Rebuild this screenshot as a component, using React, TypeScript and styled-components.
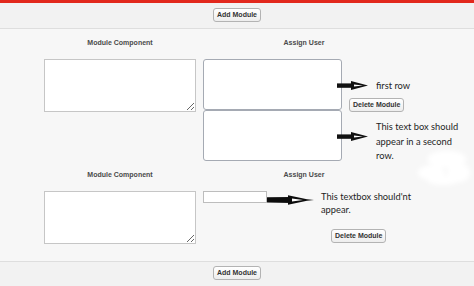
import React from "react";
import styled, { createGlobalStyle } from "styled-components";

const GlobalStyle = createGlobalStyle`
  html, body {
    margin: 0;
    padding: 0;
    background: #f7f7f7;
  }
  * {
    box-sizing: border-box;
  }
`;

const Page = styled.div`
  position: relative;
  width: 474px;
  height: 286px;
  overflow: hidden;
  background: #f7f7f7;
  font-family: Arial, "Liberation Sans", sans-serif;
  display: flex;
  flex-direction: column;
`;

const RedBar = styled.div`
  height: 3px;
  background: #e2281d;
`;

const ButtonBar = styled.div<{ $top?: boolean }>`
  height: ${(p) => (p.$top ? "27px" : "26px")};
  background: #f2f2f2;
  display: flex;
  justify-content: center;
  align-items: ${(p) => (p.$top ? "center" : "flex-start")};
  padding-top: ${(p) => (p.$top ? "0" : "4px")};
  border-bottom: ${(p) => (p.$top ? "1px solid #dedede" : "none")};
  border-top: ${(p) => (p.$top ? "none" : "1px solid #dedede")};
`;

const SmallButton = styled.button`
  height: 14px;
  padding: 0 3px;
  font-family: Arial, "Liberation Sans", sans-serif;
  font-size: 7px;
  font-weight: bold;
  color: #333;
  background: linear-gradient(#ffffff, #ededed);
  border: 1px solid #b3b3b3;
  border-radius: 3px;
  line-height: 12px;
  cursor: pointer;
`;

const DeleteButton = styled(SmallButton)<{ $left: number; $top: number }>`
  margin-left: ${(p) => p.$left}px;
  margin-top: ${(p) => p.$top}px;
  align-self: flex-start;
`;

const ModuleBlock = styled.section<{ $top: number; $bottom: number }>`
  padding-top: ${(p) => p.$top}px;
  padding-bottom: ${(p) => p.$bottom}px;
`;

const HeaderRow = styled.div`
  display: grid;
  grid-template-columns: 152px 202px;
  column-gap: 7px;
  padding-left: 44px;
  height: 9px;
  margin-bottom: 12px;
`;

const HeaderCell = styled.div`
  text-align: center;
  font-size: 7px;
  font-weight: bold;
  line-height: 9px;
  color: #4a4a4a;
`;

const BodyRow = styled.div`
  display: flex;
  align-items: flex-start;
  padding-left: 44px;
`;

const ComponentArea = styled.textarea`
  width: 152px;
  height: 53px;
  margin: 0 7px 0 0;
  padding: 2px;
  background: #fff;
  border: 1px solid #c6c6c6;
  border-radius: 0;
  font-size: 8px;
`;

const UserColumn = styled.div`
  display: flex;
  flex-direction: column;
  width: 139px;
`;

const UserArea = styled.textarea`
  width: 139px;
  height: 51px;
  margin: 0;
  padding: 2px;
  resize: none;
  background: #fff;
  border: 1px solid #a5aab3;
  border-radius: 3px;
  font-size: 8px;
`;

const UserInput = styled.input`
  width: 64px;
  height: 12px;
  margin: 0;
  padding: 0 2px;
  background: #fff;
  border: 1px solid #bdbdbd;
  border-radius: 0;
  font-size: 8px;
`;

const NoteColumn = styled.div<{ $shift: number }>`
  display: flex;
  flex-direction: column;
  margin-left: ${(p) => p.$shift}px;
`;

const NoteRow = styled.div<{ $top: number; $gap: number }>`
  display: flex;
  align-items: flex-start;
  gap: ${(p) => p.$gap}px;
  margin-top: ${(p) => p.$top}px;
`;

const NoteText = styled.div<{ $lh: number }>`
  font-family: Lato, "Open Sans", sans-serif;
  font-size: 9.3px;
  line-height: ${(p) => p.$lh}px;
  color: #1e1e1e;
`;

const ArrowBox = styled.div<{ $top: number }>`
  margin-top: ${(p) => p.$top}px;
  display: flex;
  flex-shrink: 0;
`;

const Smudge = styled.div`
  position: absolute;
  left: 414px;
  top: 138px;
  width: 60px;
  height: 52px;
  pointer-events: none;
`;

const ShortArrow = () => (
  <svg width="31" height="9" viewBox="0 0 31 9">
    <rect x="0" y="2.4" width="16" height="4.4" fill="#111" />
    <polygon points="14,0 31,4.5 14,9" fill="#111" />
    <polygon points="17,3.4 26,4.5 17,5.6" fill="#fff" />
  </svg>
);

const LongArrow = () => (
  <svg width="47" height="10" viewBox="0 0 47 10">
    <polygon points="0,2.2 24,2 24,8 0,7.6" fill="#0c0c0c" />
    <polygon points="21,0.3 40,4.2 47,5 40,5.8 21,9.7" fill="#0c0c0c" />
    <polygon points="25,3.4 36,5 25,6.6" fill="#fff" />
  </svg>
);

export default function App() {
  return (
    <Page>
      <GlobalStyle />
      <RedBar />
      <ButtonBar $top>
        <SmallButton>Add Module</SmallButton>
      </ButtonBar>

      <ModuleBlock $top={9} $bottom={0}>
        <HeaderRow>
          <HeaderCell>Module Component</HeaderCell>
          <HeaderCell>Assign User</HeaderCell>
        </HeaderRow>
        <BodyRow>
          <ComponentArea />
          <UserColumn>
            <UserArea />
            <UserArea />
          </UserColumn>
          <NoteColumn $shift={-5}>
            <NoteRow $top={22} $gap={8}>
              <ArrowBox $top={0.5}>
                <ShortArrow />
              </ArrowBox>
              <NoteText $lh={9}>first row</NoteText>
            </NoteRow>
            <DeleteButton $left={12} $top={8}>
              Delete Module
            </DeleteButton>
            <NoteRow $top={8} $gap={8}>
              <ArrowBox $top={11.5}>
                <ShortArrow />
              </ArrowBox>
              <NoteText $lh={14.5}>
                This text box should
                <br />
                appear in a second
                <br />
                row.
              </NoteText>
            </NoteRow>
          </NoteColumn>
        </BodyRow>
      </ModuleBlock>

      <ModuleBlock $top={6} $bottom={17}>
        <HeaderRow>
          <HeaderCell>Module Component</HeaderCell>
          <HeaderCell>Assign User</HeaderCell>
        </HeaderRow>
        <BodyRow>
          <ComponentArea />
          <UserInput />
          <NoteColumn $shift={0}>
            <NoteRow $top={-1} $gap={7}>
              <ArrowBox $top={5}>
                <LongArrow />
              </ArrowBox>
              <NoteText $lh={13}>
                This textbox should'nt
                <br />
                appear.
              </NoteText>
            </NoteRow>
            <DeleteButton $left={64} $top={13}>
              Delete Module
            </DeleteButton>
          </NoteColumn>
        </BodyRow>
      </ModuleBlock>

      <ButtonBar>
        <SmallButton>Add Module</SmallButton>
      </ButtonBar>

      <Smudge>
        <svg width="60" height="52" viewBox="0 0 62 54">
          <defs>
            <filter id="blur" x="-30%" y="-30%" width="160%" height="160%">
              <feGaussianBlur stdDeviation="2.2" />
            </filter>
          </defs>
          <g fill="#ffffff" filter="url(#blur)">
            <ellipse cx="34" cy="22" rx="20" ry="9" />
            <ellipse cx="18" cy="36" rx="14" ry="8" />
            <ellipse cx="46" cy="36" rx="12" ry="10" />
            <ellipse cx="30" cy="44" rx="16" ry="5" />
          </g>
        </svg>
      </Smudge>
    </Page>
  );
}
